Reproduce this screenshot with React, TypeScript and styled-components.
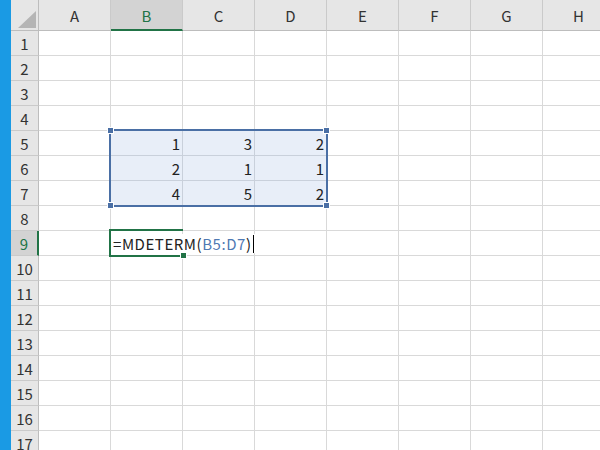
import React from "react"
import styled, { createGlobalStyle } from "styled-components"

const GlobalStyle = createGlobalStyle`
  html, body {
    margin: 0;
    padding: 0;
    background: #ffffff;
    overflow: hidden;
  }
  body {
    font-family: "Noto Sans CJK JP", "Noto Sans", "Liberation Sans", sans-serif;
  }
`

const COLS = ["A", "B", "C", "D", "E", "F", "G", "H"]
const ROWS = 17

const values: Record<string, number> = {
  B5: 1, C5: 3, D5: 2,
  B6: 2, C6: 1, D6: 1,
  B7: 4, C7: 5, D7: 2,
}

const inRange = (col: number, row: number) => col >= 1 && col <= 3 && row >= 5 && row <= 7

const Page = styled.div`
  display: flex;
  width: 600px;
  height: 450px;
  overflow: hidden;
`

const BlueStrip = styled.div`
  width: 11px;
  flex-shrink: 0;
  background: #1a9ae4;
`

const Sheet = styled.div`
  position: relative;
  display: grid;
  grid-template-columns: 28px repeat(8, 72px);
  grid-template-rows: 31px repeat(${ROWS}, 25px);
  flex-shrink: 0;
`

const Corner = styled.div`
  position: relative;
  background: #e6e6e6;
  border-right: 1px solid #bdbdbd;
  border-bottom: 1px solid #bdbdbd;
  box-sizing: border-box;

  &::after {
    content: "";
    position: absolute;
    right: 2px;
    bottom: 2px;
    width: 0;
    height: 0;
    border-left: 18px solid transparent;
    border-bottom: 17px solid #b5b5b5;
  }
`

const ColHeader = styled.div<{ $active?: boolean }>`
  display: flex;
  align-items: center;
  justify-content: center;
  box-sizing: border-box;
  background: ${(p) => (p.$active ? "#d3d3d3" : "#e6e6e6")};
  border-right: 1px solid #cacaca;
  border-bottom: ${(p) => (p.$active ? "2px solid #217346" : "1px solid #bdbdbd")};
  color: ${(p) => (p.$active ? "#217346" : "#333333")};
  font-size: 15px;
  padding-top: ${(p) => (p.$active ? "1px" : "0")};
`

const RowHeader = styled.div<{ $active?: boolean }>`
  display: flex;
  align-items: center;
  justify-content: center;
  box-sizing: border-box;
  background: ${(p) => (p.$active ? "#d3d3d3" : "#e6e6e6")};
  border-bottom: 1px solid #cacaca;
  border-right: ${(p) => (p.$active ? "2px solid #217346" : "1px solid #bdbdbd")};
  color: ${(p) => (p.$active ? "#217346" : "#333333")};
  font-size: 15px;
`

const Cell = styled.div<{ $selected?: boolean }>`
  display: flex;
  align-items: center;
  justify-content: flex-end;
  box-sizing: border-box;
  padding-right: 2px;
  background: ${(p) => (p.$selected ? "#e8eef8" : "#ffffff")};
  border-right: 1px solid ${(p) => (p.$selected ? "#c9d0db" : "#d9d9d9")};
  border-bottom: 1px solid ${(p) => (p.$selected ? "#c9d0db" : "#d9d9d9")};
  color: #222222;
  font-size: 15px;
`

const Selection = styled.div`
  position: absolute;
  grid-row: 6 / 9;
  grid-column: 3 / 6;
  left: -2px;
  top: -2px;
  right: -1px;
  bottom: -1px;
  border: 2px solid #4a6fa5;
  pointer-events: none;
`

const Handle = styled.span<{ $x: "left" | "right"; $y: "top" | "bottom"; $color: string }>`
  position: absolute;
  width: 5px;
  height: 5px;
  background: ${(p) => p.$color};
  border: 1px solid #ffffff;
  ${(p) => p.$x}: -4px;
  ${(p) => p.$y}: -4px;
`

const Editor = styled.div`
  position: absolute;
  grid-row: 10 / 11;
  grid-column: 3 / 5;
  left: -2px;
  top: -2px;
  bottom: -1px;
  width: 150px;
  display: flex;
  align-items: center;
  pointer-events: none;
`

const ActiveBox = styled.div`
  position: absolute;
  left: 0;
  top: 0;
  width: 74px;
  bottom: 0;
  border: 2px solid #217346;
  border-right: none;
  box-sizing: border-box;
`

const FormulaText = styled.span`
  position: relative;
  margin-left: 4px;
  padding-right: 1px;
  background: #ffffff;
  font-size: 15px;
  color: #222222;
  white-space: nowrap;
  line-height: 19px;
  letter-spacing: 0.55px;
`

const Ref = styled.span`
  color: #4f79b3;
`

const Caret = styled.span`
  display: inline-block;
  width: 1px;
  height: 18px;
  background: #000000;
  vertical-align: -3px;
  margin-left: 1px;
`

export default function App() {
  const cells: React.ReactNode[] = []

  cells.push(<Corner key="corner" />)
  COLS.forEach((c) => {
    cells.push(
      <ColHeader key={`h-${c}`} $active={c === "B"}>
        {c}
      </ColHeader>
    )
  })

  for (let r = 1; r <= ROWS; r++) {
    cells.push(
      <RowHeader key={`r-${r}`} $active={r === 9}>
        {r}
      </RowHeader>
    )
    COLS.forEach((c, i) => {
      const id = `${c}${r}`
      cells.push(
        <Cell key={id} $selected={inRange(i, r)}>
          {values[id] ?? ""}
        </Cell>
      )
    })
  }

  return (
    <>
      <GlobalStyle />
      <Page>
        <BlueStrip />
        <Sheet>
          {cells}
          <Selection>
            <Handle $x="left" $y="top" $color="#4a6fa5" />
            <Handle $x="right" $y="top" $color="#4a6fa5" />
            <Handle $x="left" $y="bottom" $color="#4a6fa5" />
            <Handle $x="right" $y="bottom" $color="#4a6fa5" />
          </Selection>
          <Editor>
            <ActiveBox>
              <Handle $x="right" $y="bottom" $color="#217346" />
            </ActiveBox>
            <FormulaText>
              =MDETERM(<Ref>B5:D7</Ref>)<Caret />
            </FormulaText>
          </Editor>
        </Sheet>
      </Page>
    </>
  )
}
